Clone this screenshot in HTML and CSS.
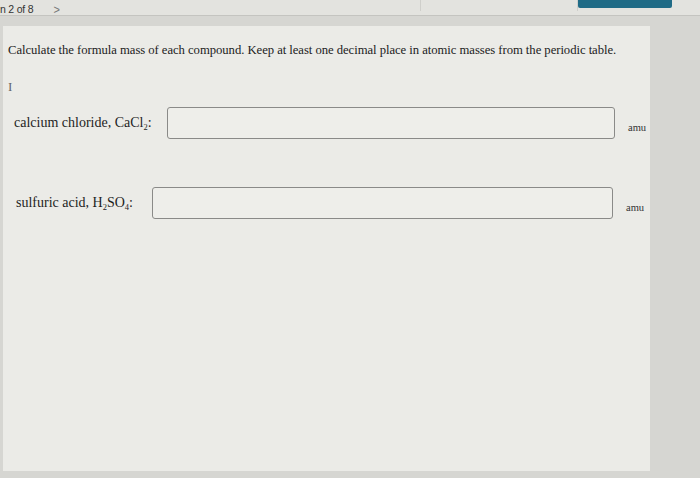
FILE: index.html
```html
<!DOCTYPE html>
<html>
<head>
<meta charset="utf-8">
<link rel="stylesheet" href="styles.css">
</head>
<body>
<div class="topbar">
  <div class="nav"><span class="count">n 2 of 8</span><span class="chev">&gt;</span></div>
  <div class="tools"><span class="sep"></span><span class="tooltext"></span><span class="sep"></span></div>
  <div class="submit">Submit All</div>
</div>
<div class="stage">
  <div class="panel">
    <p class="prompt">Calculate the formula mass of each compound. Keep at least one decimal place in atomic masses from the periodic table.</p>
    <div class="cursor">I</div>
    <div class="row row1">
      <span class="label">calcium chloride, CaCl<sub>2</sub>:</span>
      <span class="box box1"></span>
      <span class="unit">amu</span>
    </div>
    <div class="row row2">
      <span class="label">sulfuric acid, H<sub>2</sub>SO<sub>4</sub>:</span>
      <span class="box box2"></span>
      <span class="unit">amu</span>
    </div>
  </div>
  <div class="side"></div>
</div>
</body>
</html>
```
FILE: styles.css
```css
html, body {
  margin: 0;
  padding: 0;
  width: 700px;
  height: 478px;
  overflow: hidden;
  background: #d6d6d2;
}
.topbar {
  height: 15px;
  background: #e3e3df;
  border-bottom: 1px solid #c4c4c0;
  display: flex;
  align-items: flex-start;
  font-family: "Liberation Sans", Arial, sans-serif;
}
.nav {
  display: flex;
  align-items: center;
  gap: 20px;
  padding-top: 3px;
  width: 420px;
}
.count {
  font-size: 10.5px;
  color: #333;
  letter-spacing: -0.2px;
}
.chev {
  font-size: 11px;
  color: #777;
  transform: scaleY(1.2);
}
.tools {
  display: flex;
  width: 158px;
  height: 11px;
}
.sep {
  width: 1px;
  height: 11px;
  background: #cfcfcb;
}
.tooltext {
  flex: 1;
}
.submit {
  width: 94px;
  height: 8px;
  background: #1f6b86;
  border-radius: 0 0 2px 2px;
  color: transparent;
  font-size: 1px;
  overflow: hidden;
}
.stage {
  display: flex;
  padding-top: 10px;
}
.panel {
  margin-left: 3px;
  width: 647px;
  height: 445px;
  background: #ebebe7;
  font-family: "Liberation Serif", "Times New Roman", serif;
  color: #222;
}
.side {
  flex: 1;
}
.prompt {
  margin: 0;
  padding: 17px 0 0 5px;
  font-size: 12.7px;
  letter-spacing: -0.05px;
  line-height: 15px;
}
.cursor {
  margin: 22px 0 0 5px;
  font-size: 13px;
  color: #666;
  line-height: 14px;
}
.row {
  display: flex;
  align-items: center;
}
.row1 {
  margin-top: 13px;
}
.row2 {
  margin-top: 48px;
}
.label {
  font-size: 14px;
  color: #1e1e1e;
}
.row1 .label {
  margin-left: 11px;
  width: 153px;
}
.row2 .label {
  margin-left: 13px;
  width: 136px;
}
sub {
  font-size: 8.5px;
  vertical-align: -3px;
  line-height: 0;
}
.box {
  height: 32px;
  border: 1px solid #8a8a88;
  border-radius: 3px;
  background: #eeeeea;
  box-sizing: border-box;
}
.box1 {
  width: 448px;
}
.box2 {
  width: 461px;
}
.unit {
  margin-left: 13px;
  font-size: 10.5px;
  color: #333;
  padding-top: 8px;
}
```
